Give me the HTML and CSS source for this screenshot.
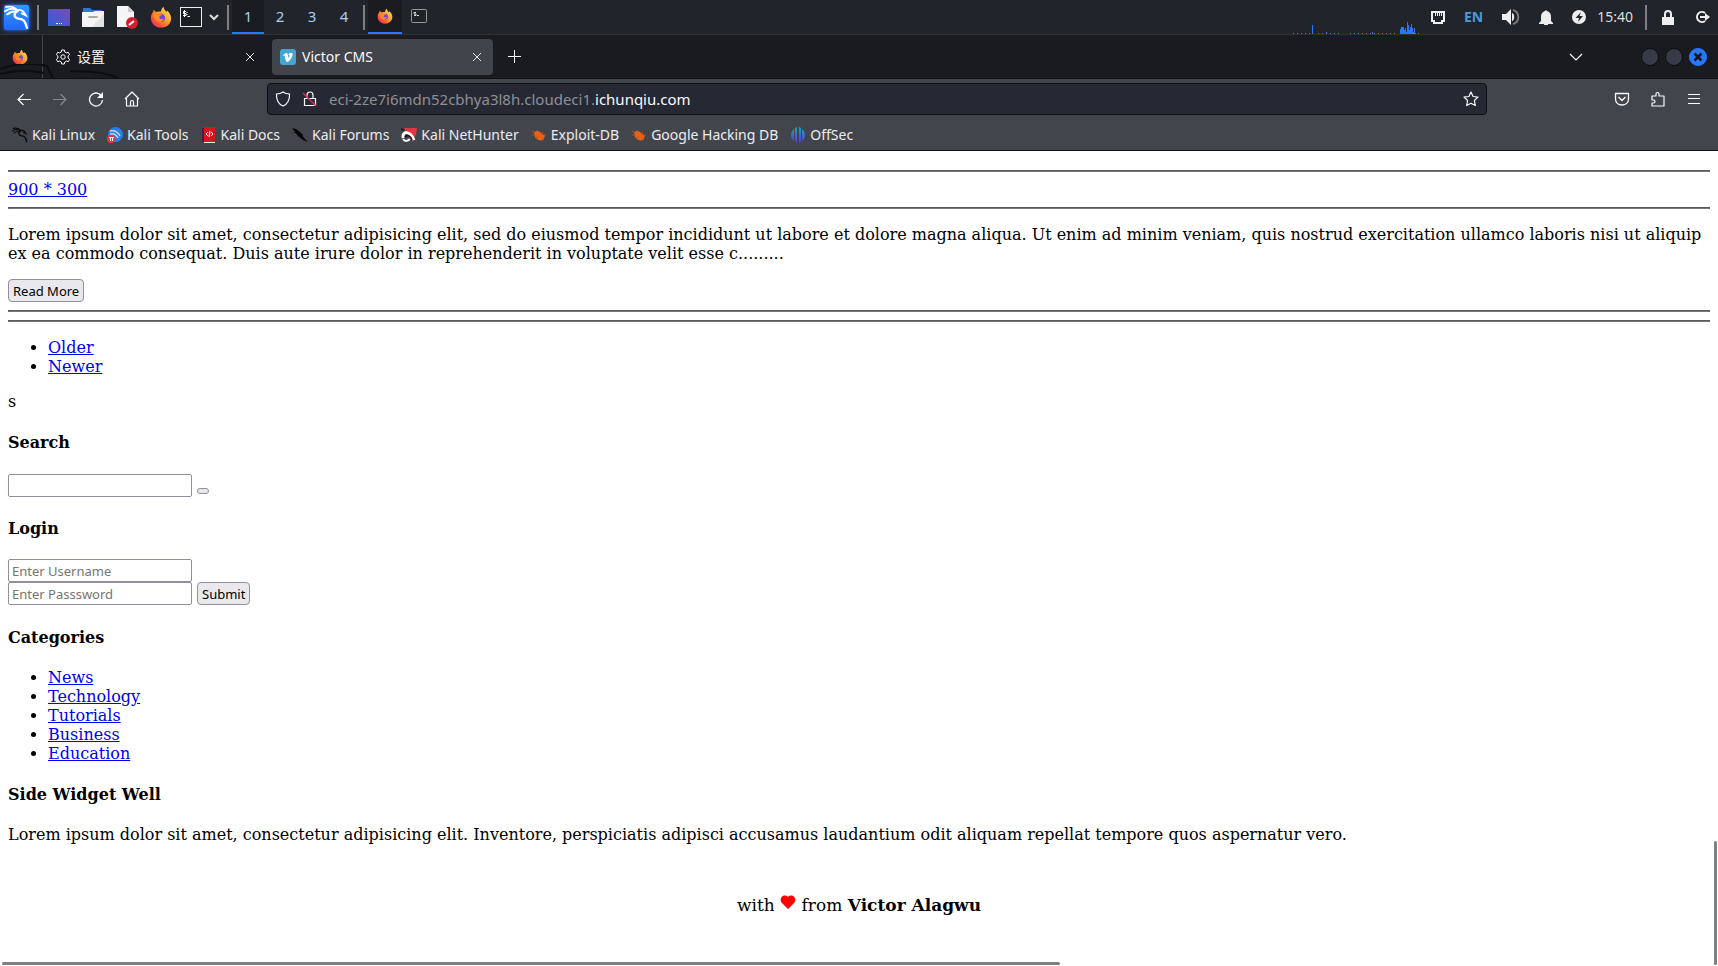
FILE: index.html
```
<!DOCTYPE html>
<html lang="en">
<head>
    <meta charset="utf-8">
    <title>Victor CMS</title>
    <link rel="stylesheet" href="styles.css">
</head>
<body>
    <svg class="defs" width="0" height="0" aria-hidden="true">
        <defs>
            <linearGradient id="fire" x1="1" y1="0" x2="0" y2="1">
                <stop offset="0.1" stop-color="#ffe04a"/>
                <stop offset="0.45" stop-color="#ff9a2b"/>
                <stop offset="0.75" stop-color="#ff4a3d"/>
                <stop offset="1" stop-color="#e0218a"/>
            </linearGradient>
            <linearGradient id="desk" x1="0" y1="1" x2="1" y2="0">
                <stop offset="0" stop-color="#2d5fd8"/>
                <stop offset="1" stop-color="#7a4bb5"/>
            </linearGradient>
            <linearGradient id="off" x1="0" y1="0" x2="0" y2="1">
                <stop offset="0" stop-color="#18a8b4"/>
                <stop offset="1" stop-color="#5a35e0"/>
            </linearGradient>
            <symbol id="firefox" viewBox="0 0 24 24">
                <path fill="url(#fire)" d="M15 1c0 3 2 4 3 5.500l.5-1.500c2.500 2 4.500 5 4.500 8.500 0 6-5 10-11 10S1 19 1 13c0-3 1-5 2.500-6.500L4 4l2.500 2.500C9 6 11 6 12 6c0-2 1-4 3-5z"/>
                <circle cx="12" cy="13" r="4.500" fill="#7048d8"/>
                <path fill="#ff8a24" d="M4 8c3-1 5 0 6 1h3c0 1.500-3 2-3 3 0 2 3 3 5 1.500-1 3-4 5-7 3.500S3 11 4 8z"/>
            </symbol>
            <symbol id="dragon" viewBox="0 0 24 24">
                <path fill="none" stroke="currentColor" stroke-width="1.800" stroke-linecap="round" d="M2 2c4-1 8 0 11 3M1 6c4-3 8-3 12-1 3-1 6 1 8 5l-4-2M3 9c3-2 6-3 8-3"/>
                <path fill="none" stroke="currentColor" stroke-width="2.200" stroke-linecap="round" d="M13 6c-4 2-4 6 1 7 5 0 7 3 8 9"/>
            </symbol>
            <symbol id="bug" viewBox="0 0 16 16">
                <path fill="#ec6012" d="M3 5c3-2 6-1 8 2l3 2-2 4c-3 1-6 0-8-3z"/>
                <path fill="none" stroke="#b8521c" d="M1 4l3 2M6 3l2 2M12 5l-1 2M15 8h-2M1 8h3M4 11l3-1M13 13l-2-1"/>
            </symbol>
        </defs>
    </svg>

    <header class="panel">
        <button class="panel-btn kali-menu" aria-label="Applications"><svg width="25" height="25"><use href="#dragon"/></svg></button>
        <span class="panel-sep"></span>
        <button class="panel-btn launcher" aria-label="Show desktop">
            <svg width="22" height="17"><rect width="22" height="17" fill="url(#desk)"/><path d="M8 14.500h2M11 14.500h1M13 14.500h1" stroke="#fff"/></svg>
        </button>
        <button class="panel-btn launcher" aria-label="Files">
            <svg width="22" height="20"><path d="M1 6V1h7l2 2h10v4z" fill="#2f76d8"/><path d="M0 5h11l2-1h9v16H0z" fill="#f4f4f4"/><path d="M22 7v13H10z" fill="#e2e2e2"/><path d="M7 10h8" stroke="#aaa" stroke-width="2" stroke-linecap="round"/></svg>
        </button>
        <button class="panel-btn launcher" aria-label="Text editor">
            <svg width="22" height="23"><path d="M1 0h11l6 6v15H1z" fill="#f5f5f5"/><path d="M12 0l6 6h-6z" fill="#ccc"/><circle cx="16" cy="17" r="6" fill="#d21f2b"/><path d="M13 19l5-4" stroke="#fff" stroke-width="2"/></svg>
        </button>
        <button class="panel-btn launcher" aria-label="Firefox"><svg width="22" height="22"><use href="#firefox"/></svg></button>
        <button class="panel-btn launcher launcher--term" aria-label="Terminal">
            <svg width="22" height="20"><rect x="0.500" y="0.500" width="21" height="19" fill="#1c1f22" stroke="#eee"/><path d="M6 4.500H3.500v2H6v2H3M4.500 3v7M7.500 9.500H10M7 5v1M7 7v1" stroke="#fff" fill="none"/></svg>
        </button>
        <button class="panel-btn more" aria-label="More terminals">
            <svg width="10" height="8"><path d="M1 2l4 4 4-4" fill="none" stroke="#ddd" stroke-width="2"/></svg>
        </button>
        <span class="panel-sep"></span>
        <nav class="workspaces">
            <button class="panel-btn workspace is-active">1</button>
            <button class="panel-btn workspace">2</button>
            <button class="panel-btn workspace">3</button>
            <button class="panel-btn workspace">4</button>
        </nav>
        <span class="panel-sep"></span>
        <div class="tasks">
            <button class="panel-btn task is-active" aria-label="Firefox window"><svg width="16" height="16"><use href="#firefox"/></svg></button>
            <button class="panel-btn task" aria-label="Terminal window">
                <svg width="16" height="14"><rect x="0.500" y="0.500" width="15" height="13" rx="1" fill="#1f2226" stroke="#9a9a9a"/><path d="M5 3.500H3v1.500h2v1.500H3M6 6.500h2" stroke="#ddd" fill="none"/></svg>
            </button>
        </div>

        <svg class="cpu" width="126" height="13" aria-hidden="true">
            <path d="M0 12.500h18M25 12.500h22M57 12.500h46" stroke="#2777ff" stroke-dasharray="1 3"/>
            <path d="M19.500 4v9M33.500 11v2M79.500 11v2" stroke="#2777ff"/>
            <path d="M122 12.500h4" stroke="#2777ff" stroke-dasharray="1 2"/>
            <path fill="#2777ff" d="M107 13V8h1V6h3v3h1V7h1v4h1V1h1v3h1v5h1V6h1V3h1v4h1v4h1V7h1v6z"/>
        </svg>
        <div class="tray">
            <svg width="14" height="13"><path d="M1 1h12v9h-2v2H3v-2H1z" fill="none" stroke="#eee" stroke-width="2"/><path d="M4.500 2v3M6.500 2v3M8.500 2v3M10.500 2v3" stroke="#eee"/></svg>
            <button class="panel-btn lang">EN</button>
            <svg width="18" height="18"><path d="M0 6h4l5-5v16l-5-5H0z" fill="#eee"/><path d="M10 5c3 1 3 7 0 8z" fill="#eee"/><path d="M11 2c7 2 7 12 0 14" fill="none" stroke="#777" stroke-width="2"/></svg>
            <svg width="14" height="15"><path d="M7 0l1 1c3 1 4 3 4 6v4l2 2v1H0v-1l2-2V7c0-3 1-5 4-6zM5 14h4v1H5z" fill="#eee"/></svg>
            <svg width="14" height="14"><circle cx="7" cy="7" r="7" fill="#eee"/><path d="M9 2L3.500 8H7l-1 4 5-6H7.500z" fill="#22242c"/></svg>
        </div>
        <time class="clock">15:40</time>
        <span class="panel-sep"></span>
        <button class="panel-btn lock" aria-label="Lock">
            <svg width="14" height="15"><path d="M1 7h12v8H1z" fill="#eee"/><path d="M4 8V4c0-4 6-4 6 0v4" fill="none" stroke="#eee" stroke-width="2"/></svg>
        </button>
        <button class="panel-btn" aria-label="Log out">
            <svg width="15" height="14"><path d="M10 3a5 5 0 1 0 0 8" fill="none" stroke="#eee" stroke-width="2"/><path d="M5 6h5V3l5 4-5 4V8H5z" fill="#eee"/></svg>
        </button>
    </header>

    <div class="tabbar">
        <svg class="wallpaper" width="120" height="14" aria-hidden="true"><path d="M0 5c15-6 35-6 47-3l6 12M0 10c15-4 30-4 44-1M70 7c20 0 38 2 48 7" fill="none" stroke="#0d0e11" stroke-width="2"/></svg>
        <button class="view" aria-label="Firefox View"><svg width="16" height="16"><use href="#firefox"/></svg></button>
        <div class="tab">
            <svg width="16" height="16" viewBox="0 0 16 16"><path d="M6.700 1h2.600l.5 2 1.500.9 2-.6 1.300 2.300-1.500 1.400v2l1.500 1.400-1.300 2.300-2-.6-1.500.9-.5 2H6.700l-.5-2-1.500-.9-2 .6-1.300-2.300L2.900 9V7L1.400 5.600l1.300-2.300 2 .6L6.200 3z" fill="none" stroke="#fbfbfe" stroke-linejoin="round"/><circle cx="8" cy="8" r="2.200" fill="none" stroke="#fbfbfe"/></svg>
            <span class="tab-title">设置</span>
            <button class="close" aria-label="Close tab"><svg width="10" height="10"><path d="M1 1l8 8M9 1L1 9" stroke="#e6e6ea"/></svg></button>
        </div>
        <div class="tab tab--active">
            <svg width="16" height="16"><rect width="16" height="16" rx="3" fill="#44a5cf"/><path d="M3 6l3-2c2 0 2 2 2.500 5 1-1 2-3 0-3 0-3 5-3 4 0-.5 3-3 6-5 7C5.500 13 5.500 10 4.500 6.500L3.500 7z" fill="#fff"/></svg>
            <span class="tab-title">Victor CMS</span>
            <button class="close" aria-label="Close tab"><svg width="10" height="10"><path d="M1 1l8 8M9 1L1 9" stroke="#e6e6ea"/></svg></button>
        </div>
        <button class="newtab" aria-label="New tab"><svg width="13" height="13"><path d="M6.500 0v13M0 6.500h13" stroke="#fbfbfe"/></svg></button>
        <button class="alltabs" aria-label="List all tabs"><svg width="14" height="8"><path d="M1 1l6 6 6-6" fill="none" stroke="#fbfbfe" stroke-width="1.200"/></svg></button>
        <div class="window-btns">
            <button class="win" aria-label="Minimize"></button>
            <button class="win" aria-label="Maximize"></button>
            <button class="win win--close" aria-label="Close"><svg width="10" height="10"><path d="M1.500 1.500l7 7M8.500 1.500l-7 7" stroke="#14151a" stroke-width="2.500"/></svg></button>
        </div>
    </div>

    <div class="toolbar">
        <div class="nav-btns">
            <button aria-label="Back"><svg width="16" height="16"><path d="M15 8.500H2M7.500 3L2 8.500 7.500 14" fill="none" stroke="#fbfbfe" stroke-width="1.200"/></svg></button>
            <button aria-label="Forward" disabled><svg width="16" height="16"><path d="M1 8.500h13M8.500 3L14 8.500 8.500 14" fill="none" stroke="#85878c" stroke-width="1.200"/></svg></button>
            <button aria-label="Reload"><svg width="16" height="16"><path d="M13.500 5A6.500 6.500 0 1 0 14.500 9" fill="none" stroke="#fbfbfe" stroke-width="1.300"/><path d="M15 1v6H9z" fill="#fbfbfe"/></svg></button>
            <button aria-label="Home"><svg width="16" height="16"><path d="M1 8l7-7 7 7M2.500 7v8h11V7M6.500 15v-4c0-2 3-2 3 0v4" fill="none" stroke="#fbfbfe" stroke-width="1.200" stroke-linejoin="round"/></svg></button>
        </div>
        <div class="urlbar">
            <svg width="16" height="16"><path d="M8 1c2 1.500 4 2 6.500 2C15 9 12 13.500 8 15 4 13.500 1 9 1.500 3 4 3 6 2.500 8 1z" fill="none" stroke="#fbfbfe" stroke-width="1.200"/></svg>
            <svg width="16" height="16"><path d="M2.500 7.500h11v7h-11zM5 7V4c0-4 6-4 6 0v3" fill="none" stroke="#fbfbfe" stroke-width="1.200"/><path d="M1 2l13 13" stroke="#e22850" stroke-width="1.400"/></svg>
            <span class="url">eci-2ze7i6mdn52cbhya3l8h.cloudeci1.<b>ichunqiu.com</b></span>
            <button aria-label="Bookmark this page"><svg width="16" height="16"><path d="M8 1l2.100 4.500 4.900.6-3.600 3.400.9 5L8 12.200 3.700 14.500l.9-5L1 6.100l4.900-.6z" fill="none" stroke="#fbfbfe" stroke-width="1.200" stroke-linejoin="round"/></svg></button>
        </div>
        <div class="tool-btns">
            <button aria-label="Pocket"><svg width="16" height="16"><path d="M1.500 2.500h13V8c0 8-13 8-13 0zM4.500 6L8 9.500 11.500 6" fill="none" stroke="#fbfbfe" stroke-width="1.300" stroke-linejoin="round"/></svg></button>
            <button aria-label="Extensions"><svg width="16" height="16"><path d="M2 5h4V3c0-2 3-2 3 0v2h5v10H2v-3h1.500c2 0 2-3 0-3H2z" fill="none" stroke="#fbfbfe" stroke-width="1.200" stroke-linejoin="round"/></svg></button>
            <button aria-label="Menu"><svg width="16" height="16"><path d="M2 3.500h12M2 7.500h12M2 12.500h12" stroke="#fbfbfe"/></svg></button>
        </div>
    </div>

    <nav class="bookmarks">
        <a href="#"><svg class="black" width="16" height="16"><use href="#dragon"/></svg>Kali Linux</a>
        <a href="#"><svg width="16" height="16"><circle cx="8.500" cy="7.500" r="7.500" fill="#2a7de8"/><path d="M3 4c5-1 8 1 10 5M3 7c4-1 6 0 8 4" stroke="#bcd8ff" fill="none" stroke-width="1.500"/><circle cx="4" cy="12" r="4" fill="#e8343c"/><path d="M2 10.500h5M3.500 11v3M5.500 11v3" stroke="#fff"/></svg>Kali Tools</a>
        <a href="#"><svg width="16" height="16"><path d="M2 0h12v15H2z" fill="#d8141c"/><path d="M1 1h2v14H1z" fill="#4c1a50"/><path d="M3 15.500h11" stroke="#eee"/><path d="M7 5L5 7l2 2M10 5l2 2-2 2M9 4l-1 6" stroke="#fff" fill="none"/></svg>Kali Docs</a>
        <a href="#"><svg width="16" height="16"><path d="M0 1l4 1 5 4 3 5 4 4-5-2-5-4-3-4z" fill="#060606"/><path d="M2 6l4-2M7 10l4-3" stroke="#060606"/></svg>Kali Forums</a>
        <a href="#"><svg width="16" height="16"><path d="M3 1h13l-1 6-3 7-5-5z" fill="#e83440"/><path d="M2 11c-1-7 7-8 11 2" stroke="#fff" stroke-width="3" fill="none"/><path d="M2 12c2 3 5 2 7 0" stroke="#fff" stroke-width="2" fill="none"/><path d="M4 10c2-3 6-1 7 3M0 2l3 1" stroke="#111" stroke-width="1.500" fill="none"/></svg>Kali NetHunter</a>
        <a href="#"><svg width="16" height="16"><use href="#bug"/></svg>Exploit-DB</a>
        <a href="#"><svg width="16" height="16"><use href="#bug"/></svg>Google Hacking DB</a>
        <a href="#"><svg width="16" height="16"><path d="M7 0v16l-2-2V1zM9 0v16l2-2V1zM4 2v12C0 11 0 5 4 2zM12 2v12c4-3 4-9 0-12z" fill="url(#off)"/></svg>OffSec</a>
    </nav>

    <main class="page">
        <hr>
        <a href="#">900 * 300</a>
        <hr>
        <p>Lorem ipsum dolor sit amet, consectetur adipisicing elit, sed do eiusmod tempor incididunt ut labore et dolore magna aliqua. Ut enim ad minim veniam, quis nostrud exercitation ullamco laboris nisi ut aliquip ex ea commodo consequat. Duis aute irure dolor in reprehenderit in voluptate velit esse c.........</p>
        <button class="btn">Read More</button>
        <hr>
        <hr>
        <ul>
            <li><a href="#">Older</a></li>
            <li><a href="#">Newer</a></li>
        </ul>
        s
        <h4>Search</h4>
        <form class="search">
            <input type="text" class="field" aria-label="Search">
            <button type="button" class="btn btn--empty" aria-label="Search"></button>
        </form>
        <h4>Login</h4>
        <form class="login">
            <input type="text" class="field" placeholder="Enter Username" aria-label="Username">
            <div class="row">
                <input type="password" class="field" placeholder="Enter Passsword" aria-label="Password">
                <button type="button" class="btn">Submit</button>
            </div>
        </form>
        <h4>Categories</h4>
        <ul>
            <li><a href="#">News</a></li>
            <li><a href="#">Technology</a></li>
            <li><a href="#">Tutorials</a></li>
            <li><a href="#">Business</a></li>
            <li><a href="#">Education</a></li>
        </ul>
        <h4>Side Widget Well</h4>
        <p>Lorem ipsum dolor sit amet, consectetur adipisicing elit. Inventore, perspiciatis adipisci accusamus laudantium odit aliquam repellat tempore quos aspernatur vero.</p>
        <footer>with <svg class="heart" width="16" height="14"><path d="M8 14L2 8C-2 3 4-2 8 2c4-4 10 1 6 6z" fill="#f00"/></svg> from <b>Victor Alagwu</b></footer>
    </main>
    <div class="scroll scroll--x"></div>
    <div class="scroll scroll--y"></div>
</body>
</html>
```
FILE: styles.css
```
:root {
    --ui-font: "Noto Sans", "Noto Sans CJK SC", sans-serif;
    --accent: #2777ff;
    --toolbar: #43454c;
}

* {
    box-sizing: border-box;
}

body {
    background: #fff;
    display: flex;
    flex-direction: column;
    margin: 0;
    min-height: 100vh;
    overflow: hidden;
    position: relative;
}

button {
    align-items: center;
    background: none;
    border: none;
    color: inherit;
    display: flex;
    font: inherit;
    justify-content: center;
    padding: 0;
}

svg {
    flex: none;
}

.defs {
    position: absolute;
}

/* desktop panel */

.panel {
    align-items: center;
    background: #22242c;
    border-bottom: 1px solid #2f3138;
    color: #ddd;
    display: flex;
    font: 14px/20px var(--ui-font);
    height: 35px;
    padding: 0 8px 0 4px;
}

.panel-btn {
    height: 34px;
}

.panel-sep {
    background: #808080;
    height: 25px;
    width: 2px;
}

.kali-menu {
    background: linear-gradient(#2e9bff, #2367ff);
    border-radius: 2px;
    box-shadow: 0 0 4px #2777ff;
    color: #fff;
    height: 25px;
    margin-right: 8px;
    width: 25px;
}

.launcher {
    margin-left: 4px;
    width: 30px;
}

.panel-sep + .launcher {
    margin-left: 5px;
}

.launcher--term {
    margin-left: 0;
}

.more {
    margin-right: 5px;
    width: 16px;
}

.workspaces,
.tasks {
    display: flex;
    margin: 0 3px;
}

.workspace,
.task {
    border-bottom: 2px solid transparent;
    color: #a5d0ee;
    font-size: 15px;
    width: 32px;
}

.task {
    width: 34px;
}

.is-active {
    background: #1b1c22;
    border-color: var(--accent);
}

.cpu {
    align-self: flex-end;
    margin: 0 12px 0 auto;
}

.tray {
    align-items: center;
    display: flex;
    gap: 19px;
}

.lang {
    color: #4a9bd6;
    font-weight: bold;
}

.clock {
    margin: 0 12px 0 11px;
}

.lock {
    margin: 0 20px 0 14px;
}

/* browser tabs */

.tabbar {
    align-items: center;
    background: #1a1b20;
    border-bottom: 1px solid #0f1013;
    color: #fbfbfe;
    display: flex;
    font: 14px/20px var(--ui-font);
    height: 44px;
    padding-right: 11px;
    position: relative;
}

.wallpaper {
    bottom: 0;
    left: 0;
    position: absolute;
}

.view {
    border-right: 1px solid #45464c;
    height: 43px;
    padding-right: 2px;
    width: 43px;
}

.tab {
    align-items: center;
    border-radius: 4px;
    display: flex;
    gap: 6px;
    height: 36px;
    margin: 0 2px;
    padding: 0 11px 0 8px;
    width: 221px;
}

.tab + .tab {
    margin-left: 4px;
}

.tab:first-of-type {
    padding-left: 10px;
}

.tab--active {
    background: #42444b;
}

.tab-title {
    flex: 1;
}

.newtab {
    margin-left: 13px;
}

.alltabs {
    margin-left: auto;
    margin-right: 58px;
}

.window-btns {
    display: flex;
    gap: 6px;
}

.win {
    background: #363b47;
    border: 1px solid #0b0c0f;
    border-radius: 50%;
    height: 18px;
    width: 18px;
}

.win--close {
    background: var(--accent);
    border-color: var(--accent);
}

/* navigation toolbar */

.toolbar {
    align-items: center;
    background: var(--toolbar);
    color: #fbfbfe;
    display: flex;
    font: 15px/20px var(--ui-font);
    height: 40px;
    padding: 0 16px;
}

.nav-btns,
.tool-btns {
    display: flex;
    gap: 20px;
}

.nav-btns {
    width: 251px;
}

.urlbar {
    align-items: center;
    background: #262833;
    border: 1px solid #0e0f13;
    border-radius: 4px;
    display: flex;
    flex: 1;
    gap: 11px;
    height: 32px;
    padding: 0 7px;
}

.url {
    color: #8f9096;
    flex: 1;
}

.url b {
    color: #fbfbfe;
    font-weight: normal;
}

.tool-btns {
    justify-content: flex-end;
    width: 215px;
}

.bookmarks {
    background: var(--toolbar);
    border-bottom: 1px solid #0f1013;
    display: flex;
    font: 14px/20px var(--ui-font);
    gap: 12px;
    height: 32px;
    padding: 0 12px;
}

.bookmarks a {
    align-items: center;
    color: #ececf0;
    display: flex;
    gap: 4px;
    text-decoration: none;
}

.black {
    color: #0c0c0c;
}

/* site content */

.page {
    color: #000;
    font: 16px/19px "DejaVu Serif", serif;
    padding: 11px 8px 0;
}

.page a {
    color: #00e;
}

.page hr {
    border: 1px solid #5a5a5a;
    border-bottom-color: #777;
    margin: 8px 0;
}

.page p,
.page ul {
    margin: 16px 0;
}

.page h4 {
    font-size: 16px;
    margin: 22px 0 21px;
}

.page .btn {
    background: #e9e9ed;
    border: 1px solid #8f8f9d;
    border-radius: 4px;
    color: #000;
    font: 13px/18px var(--ui-font);
    height: 23px;
    padding: 0 4px;
}

.page .btn--empty {
    align-self: flex-end;
    height: 6px;
    margin-bottom: 3px;
    width: 12px;
}

.field {
    background: #fff;
    border: 1px solid #8f8f9d;
    border-radius: 2px;
    font: 13px/18px var(--ui-font);
    height: 23px;
    padding: 0 3px;
    width: 184px;
}

.field::placeholder {
    color: #757575;
}

.search,
.row {
    display: flex;
    gap: 5px;
}

.search {
    padding-top: 1px;
}

.login {
    display: flex;
    flex-direction: column;
    padding-bottom: 1px;
}

footer {
    font-size: 17px;
    padding-top: 35px;
    text-align: center;
}

.heart {
    margin-bottom: 2px;
}

.scroll {
    background: #7b8080;
    border-radius: 2px;
    position: absolute;
}

.scroll--x {
    bottom: 1px;
    height: 3px;
    left: 2px;
    width: 1058px;
}

.scroll--y {
    bottom: 1px;
    height: 124px;
    right: 1px;
    width: 3px;
}
```
